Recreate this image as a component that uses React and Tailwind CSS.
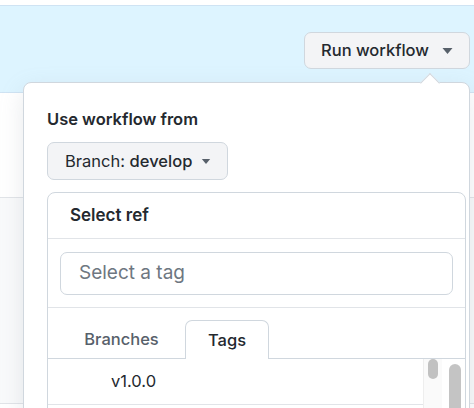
import React from 'react';

const Caret = ({ className }) => (
  <svg viewBox="0 0 10 6" className={className} fill="currentColor">
    <path d="M0 0h10L5 6z" />
  </svg>
);

export default function App() {
  return (
    <div
      className="relative w-[474px] h-[408px] overflow-hidden bg-white text-[#24292f]"
      style={{ fontFamily: 'Inter, "Noto Sans", sans-serif' }}
    >
      {/* page behind the popover */}
      <div className="h-[5px] bg-white" />
      <div className="h-[88px] bg-[#ddf4ff] border-y border-[#cfe3f3] flex justify-end items-start pt-[26px] pr-[4px]">
        <button className="h-[37px] w-[166px] flex items-center justify-center gap-[13px] rounded-[7px] border border-[#d0d7de] bg-[#f3f4f6] text-[16.5px] font-medium">
          Run workflow
          <Caret className="w-[11px] h-[6px] text-[#57606a]" />
        </button>
      </div>
      <div className="h-[105px] border-b border-[#e1e4e8]" />
      <div className="h-[206px] bg-[#f9fafb] border-b border-[#e1e4e8]" />

      {/* popover caret */}
      <div className="absolute left-[423px] top-[76px] w-[14px] h-[14px] rotate-45 bg-white border-l border-t border-[#d0d7de] z-20" />

      {/* popover */}
      <div className="absolute left-[23px] top-[82px] w-[447px] h-[340px] bg-white border border-[#d0d7de] rounded-[8px] shadow-[0_8px_24px_rgba(140,149,159,0.2)] z-10 pl-[23px] pr-[3px] pt-[25px]">
        <div className="text-[16.5px] font-semibold leading-[22px]">Use workflow from</div>
        <button className="mt-[12px] h-[38px] w-[181px] flex items-center pl-[17px] gap-[9px] rounded-[7px] border border-[#d0d7de] bg-[#f3f4f6] text-[16.5px]">
          <span>
            Branch: <span className="font-medium">develop</span>
          </span>
          <Caret className="w-[10px] h-[5px] text-[#57606a]" />
        </button>

        <div className="mt-[12px] border border-[#d0d7de] rounded-[8px] overflow-hidden">
          <div className="h-[46px] flex items-center pl-[22px] border-b border-[#e1e4e8] text-[17px] font-semibold">
            Select ref
          </div>
          <div className="px-[12px] pt-[13px] pb-[12px] border-b border-[#e1e4e8]">
            <div className="h-[43px] flex items-center pl-[18px] rounded-[7px] border border-[#d0d7de] text-[19px] text-[#6e7781]">
              Select a tag
            </div>
          </div>
          <div className="flex items-end pl-[13px] pt-[12px] border-b border-[#d0d7de]">
            <div className="h-[38px] w-[121px] flex items-center justify-center text-[16.5px] font-medium text-[#57606a]">
              Branches
            </div>
            <div className="ml-[3px] -mb-px h-[39px] w-[84px] flex items-center justify-center rounded-t-[7px] border border-b-0 border-[#d0d7de] bg-white text-[16.5px] font-medium">
              Tags
            </div>
          </div>
          <div className="flex h-[60px]">
            <div className="flex-1">
              <div className="h-[46px] flex items-center pl-[63px] border-b border-[#e1e4e8] text-[16.5px]">
                v1.0.0
              </div>
            </div>
            <div className="w-[19px] bg-[#fafafa] border-l border-[#eeeeee] flex justify-center">
              <div className="w-[10px] h-[20px] rounded-full bg-[#c1c1c1]" />
            </div>
            <div className="w-[23px] flex justify-center pt-[5px] pl-[2px]">
              <div className="w-[12px] h-[60px] rounded-full bg-[#c4c4c4]" />
            </div>
          </div>
        </div>
      </div>
    </div>
  );
}
